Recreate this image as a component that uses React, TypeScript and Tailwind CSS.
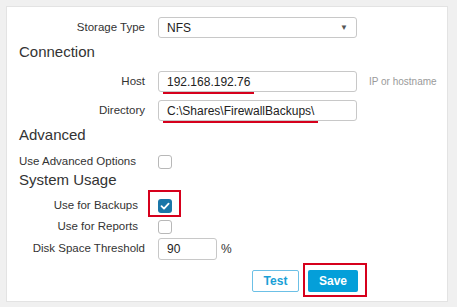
import React from 'react';

const font = { fontFamily: '"Liberation Sans", Arial, sans-serif' };

const Label = ({ children, pad = false }: { children: React.ReactNode; pad?: boolean }) => (
  <div className={`w-[126px] shrink-0 text-right text-[11.5px] text-[#333] ${pad ? 'pr-[7px]' : ''}`}>{children}</div>
);

const Heading = ({ children, mt }: { children: React.ReactNode; mt: string }) => (
  <div className={`${mt} h-[20px] leading-[20px] text-[15px] text-[#333]`}>{children}</div>
);

const Checkbox = ({ checked = false }: { checked?: boolean }) =>
  checked ? (
    <div className="w-[14px] h-[14px] rounded-[3px] bg-[#1a76a8] flex items-center justify-center">
      <svg width="10" height="10" viewBox="0 0 10 10" fill="none">
        <path d="M1.5 5.2 L4 7.6 L8.6 2.6" stroke="white" strokeWidth="1.8" strokeLinecap="round" strokeLinejoin="round" />
      </svg>
    </div>
  ) : (
    <div className="w-[14px] h-[14px] rounded-[3px] border border-[#b8b8b8] bg-white" />
  );

const Underlined = ({ children }: { children: React.ReactNode }) => (
  <span className="relative inline-block">
    {children}
    <span className="absolute left-[-4px] right-[-4px] bottom-[-3px] h-[2px] bg-[#d6001c]" />
  </span>
);

export default function App() {
  return (
    <div className="w-[457px] h-[307px] bg-[#f0f0f0] pt-[6px] pl-[6px]" style={font}>
      <div className="w-[442px] h-[296px] bg-white border border-[#e3e3e3] pl-[12px] pt-[10px] relative">
        {/* storage type */}
        <div className="flex items-center h-[21px]">
          <Label>Storage Type</Label>
          <div className="ml-[13px] w-[199px] h-[21px] border border-[#c8c8c8] rounded-[3px] flex items-center justify-between pl-[8px] pr-[8px] text-[12px] text-[#222]">
            <span>NFS</span>
            <span className="text-[8px] text-[#555]">▼</span>
          </div>
        </div>

        <Heading mt="mt-[4px]">Connection</Heading>

        <div className="mt-[9px] flex items-center h-[21px]">
          <Label>Host</Label>
          <div className="ml-[13px] w-[199px] h-[21px] border border-[#c8c8c8] rounded-[3px] flex items-center pl-[8px] text-[12px] text-[#222]">
            <Underlined>192.168.192.76</Underlined>
          </div>
          <span className="ml-[12px] text-[10px] text-[#9a9a9a]">IP or hostname</span>
        </div>

        <div className="mt-[8px] flex items-center h-[21px]">
          <Label>Directory</Label>
          <div className="ml-[13px] w-[199px] h-[21px] border border-[#c8c8c8] rounded-[3px] flex items-center pl-[8px] text-[12px] text-[#222]">
            <Underlined>C:\Shares\FirewallBackups\</Underlined>
          </div>
        </div>

        <Heading mt="mt-[4px]">Advanced</Heading>

        <div className="mt-[10px] flex items-center h-[14px]">
          <div className="w-[126px] shrink-0 text-left text-[11.5px] text-[#333]">Use Advanced Options</div>
          <div className="ml-[13px]">
            <Checkbox />
          </div>
        </div>

        <Heading mt="mt-[1px]">System Usage</Heading>

        <div className="mt-[9px] flex items-center h-[14px]">
          <Label pad>Use for Backups</Label>
          <div className="ml-[13px] relative">
            <Checkbox checked />
            <div className="absolute left-[-10px] top-[-9px] w-[33px] h-[27px] border-2 border-[#d6001c]" />
          </div>
        </div>

        <div className="mt-[7px] flex items-center h-[14px]">
          <Label pad>Use for Reports</Label>
          <div className="ml-[13px]">
            <Checkbox />
          </div>
        </div>

        <div className="mt-[4px] flex items-center h-[22px]">
          <Label>Disk Space Threshold</Label>
          <div className="ml-[13px] w-[59px] h-[22px] border border-[#c8c8c8] rounded-[3px] flex items-center pl-[8px] text-[12px] text-[#222]">
            90
          </div>
          <span className="ml-[4px] text-[12px] text-[#333]">%</span>
        </div>

        <div className="mt-[10px] flex items-center h-[22px] pl-[233px] gap-[9px]">
          <div className="w-[47px] h-[22px] border border-[#6cc0e6] rounded-[2px] flex items-center justify-center text-[12px] font-bold text-[#1a9fd6]">
            Test
          </div>
          <div className="relative">
            <div className="w-[50px] h-[22px] bg-[#049fd9] rounded-[2px] flex items-center justify-center text-[12px] font-bold text-white">
              Save
            </div>
            <div className="absolute left-[-5px] top-[-7px] w-[64px] h-[34px] border-2 border-[#d6001c]" />
          </div>
        </div>
      </div>
    </div>
  );
}
